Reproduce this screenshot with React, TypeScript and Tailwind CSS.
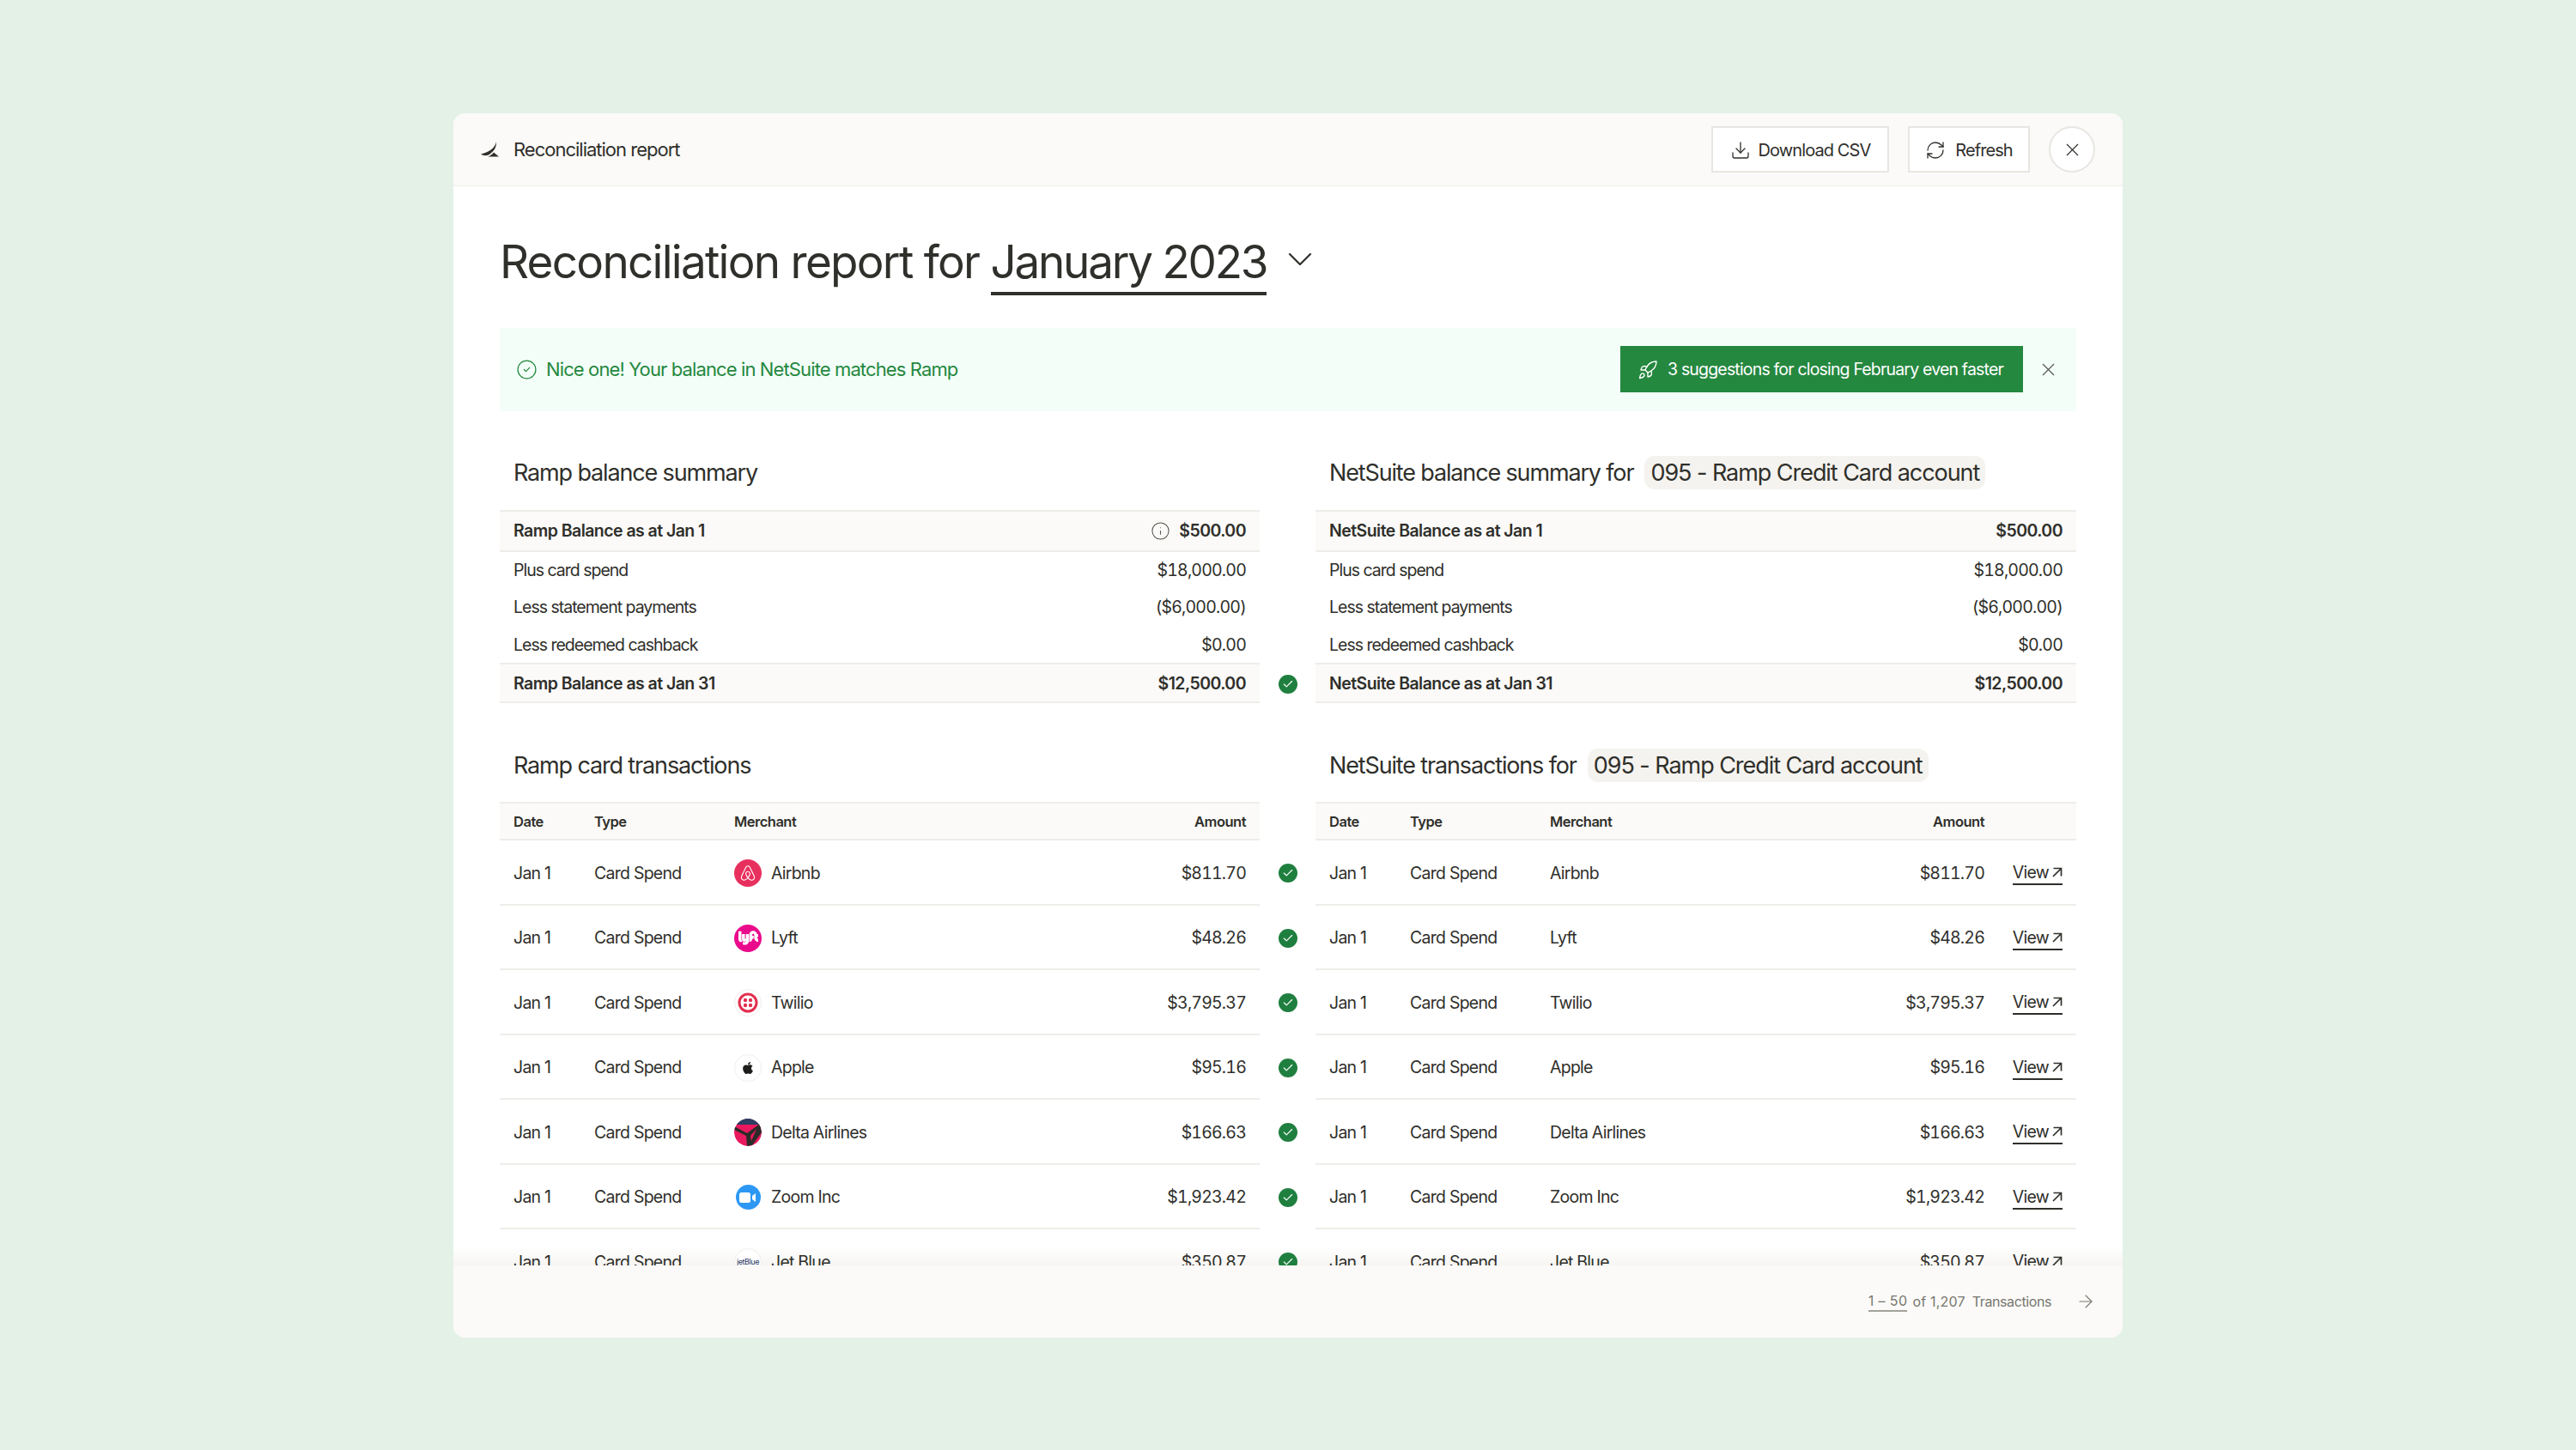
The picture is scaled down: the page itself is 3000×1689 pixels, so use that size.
import React from "react";
import { ArrowRight, Check, CheckCircle2, ChevronDown, Download, Info, RefreshCw, Rocket, X } from "lucide-react";
import { FaAirbnb, FaApple, FaLyft } from "react-icons/fa";

const txns = [
  { merchant: "Airbnb", amount: "$811.70", logo: "airbnb" },
  { merchant: "Lyft", amount: "$48.26", logo: "lyft" },
  { merchant: "Twilio", amount: "$3,795.37", logo: "twilio" },
  { merchant: "Apple", amount: "$95.16", logo: "apple" },
  { merchant: "Delta Airlines", amount: "$166.63", logo: "delta" },
  { merchant: "Zoom Inc", amount: "$1,923.42", logo: "zoom" },
  { merchant: "Jet Blue", amount: "$350.87", logo: "jetblue" },
];

const summary = [
  ["Plus card spend", "$18,000.00"],
  ["Less statement payments", "($6,000.00)"],
  ["Less redeemed cashback", "$0.00"],
];

const MerchantLogo = ({ logo }: { logo: string }) => {
  if (logo === "airbnb") {
    return (
      <div className="flex h-8 w-8 items-center justify-center rounded-full bg-[#e8305f] text-white">
        <FaAirbnb size={20} />
      </div>
    );
  }
  if (logo === "lyft") {
    return (
      <div className="flex h-8 w-8 items-center justify-center rounded-full bg-[#ea0b8c] text-white">
        <FaLyft size={23} />
      </div>
    );
  }
  if (logo === "twilio") {
    return (
      <div className="flex h-8 w-8 items-center justify-center rounded-full border border-[#f1efeb] bg-white">
        <svg width="24" height="24" viewBox="0 0 24 24">
          <circle cx="12" cy="12" r="10" fill="none" stroke="#e2304f" strokeWidth="3" />
          <circle cx="9" cy="9" r="2.2" fill="#e2304f" />
          <circle cx="15" cy="9" r="2.2" fill="#e2304f" />
          <circle cx="9" cy="15" r="2.2" fill="#e2304f" />
          <circle cx="15" cy="15" r="2.2" fill="#e2304f" />
        </svg>
      </div>
    );
  }
  if (logo === "apple") {
    return (
      <div className="flex h-8 w-8 items-center justify-center rounded-full border border-[#f1efeb] bg-white text-[#1d1d1b]">
        <FaApple size={16} />
      </div>
    );
  }
  if (logo === "delta") {
    return (
      <svg width="32" height="32" viewBox="0 0 32 32" className="rounded-full">
        <circle cx="16" cy="16" r="16" fill="#e9185f" />
        <path d="M4 5 A16 16 0 0 1 28 5 L30 7 L2 7 Z" fill="#2d3f63" />
        <path d="M0 9 L15 17 L30 6 L32 16 L21 31 L15 32 L14 20 L0 13 Z" fill="#2b2b28" />
        <path d="M19 20 L26 12 L20 26 Z" fill="#e9185f" />
      </svg>
    );
  }
  if (logo === "zoom") {
    return (
      <div className="mx-[1.5px] flex h-[29px] w-[29px] items-center justify-center rounded-full bg-[#2d98f4]">
        <svg width="22" height="14" viewBox="0 0 22 14">
          <rect x="1" y="1" width="13" height="12" rx="2.5" fill="#fff" />
          <path d="M16 5 L20 2 V12 L16 9 Z" fill="#fff" />
        </svg>
      </div>
    );
  }
  return (
    <div className="flex h-8 w-8 items-center justify-center overflow-hidden rounded-full border border-[#f1efeb] bg-white text-[9px] tracking-[-0.4px] text-[#26325c]">
      jetBlue
    </div>
  );
};

const CheckDot = () => (
  <div className="flex h-[22px] w-[22px] items-center justify-center rounded-full bg-[#1f7f3f] text-white">
    <Check size={14} strokeWidth={2} />
  </div>
);

const SummaryTable = ({ name, info }: { name: string; info?: boolean }) => (
  <div className="text-[19.5px]">
    <div className="flex h-[49px] items-center justify-between border-y-2 border-[#efede9] bg-[#fbfaf8] px-4 pt-[1px] font-semibold tracking-[-0.55px]">
      <span>{name} Balance as at Jan 1</span>
      <span className="flex items-center gap-[10px]">
        {info && <Info size={23} strokeWidth={1.1} className="text-[#55554f]" />}
        $500.00
      </span>
    </div>
    {summary.map(([label, value]) => (
      <div key={label} className="flex h-[43.33px] items-center justify-between px-4 pt-[1px] tracking-[-1px]">
        <span>{label}</span>
        <span className="tabular-nums tracking-[-0.8px]">{value}</span>
      </div>
    ))}
  </div>
);

const TotalRow = ({ name }: { name: string }) => (
  <div className="flex h-[47px] items-center justify-between border-y-2 border-[#efede9] bg-[#fbfaf8] px-4 pt-[2px] text-[19.5px] font-semibold tracking-[-0.55px]">
    <span>{name} Balance as at Jan 31</span>
    <span>$12,500.00</span>
  </div>
);

const AccountPill = () => (
  <span className="mt-[2px] h-[39px] rounded-[12px] bg-[#f5f3ef] px-[7px] leading-[39px] tracking-[-1.05px]">095 - Ramp Credit Card account</span>
);

const App: React.FC = () => {
  return (
    <div className="flex h-[1689px] items-center justify-center bg-[#e4f1e7] font-['Inter',sans-serif] text-[#2f2f2b]">
      <div className="relative flex h-[1426px] w-[1944px] flex-col overflow-hidden rounded-[14px] bg-white">
        {/* soft shade behind the last visible row */}
        <div className="pointer-events-none absolute bottom-[84px] left-0 right-0 h-[22px] bg-gradient-to-b from-transparent to-[#f6f5f2]" />

        {/* top bar */}
        <div className="flex h-[85px] shrink-0 items-center justify-between border-b border-[#f1efeb] bg-[#fbfaf8] pl-[32px] pr-[32px] pt-[1px]">
          <div className="flex items-center gap-[17px] text-[22px] tracking-[-1px]">
            <svg width="21" height="18" viewBox="0 0 21 18" fill="#2f2f2b">
              <path d="M18 0 C17 7 10 12 0 14.5 C3 16.5 7 17 10.5 14.5 C15.5 11 18.5 6 18 0 Z" />
              <path d="M15 12.5 L21 17.5 H8 C11 16.5 13 15 15 12.5 Z" />
            </svg>
            Reconciliation report
          </div>
          <div className="flex items-center gap-[22px] text-[20px] tracking-[-0.9px]">
            <button className="flex h-[54px] w-[207px] items-center justify-center gap-[9px] border-2 border-[#e8e6e1] bg-white pt-[2px]">
              <Download size={24} strokeWidth={1.3} />
              Download CSV
            </button>
            <button className="flex h-[54px] w-[142px] items-center justify-center gap-[11px] border-2 border-[#e8e6e1] bg-white pt-[2px]">
              <RefreshCw size={24} strokeWidth={1.3} />
              Refresh
            </button>
            <button className="flex h-[54px] w-[54px] items-center justify-center rounded-full border-2 border-[#e8e6e1] bg-white">
              <X size={25} strokeWidth={1.1} />
            </button>
          </div>
        </div>

        {/* scroll area */}
        <div className="relative min-h-0 flex-1 overflow-hidden px-[54px]">
          <div className="mt-[52px] flex h-[113px] items-start gap-[15px]">
            <h1 className="text-[53px] leading-[72px] tracking-[-1.72px]">
              Reconciliation report for{" "}
              <span className="inline-block border-b-4 border-[#2f2f2b] leading-[70px] tracking-[-2.25px]">January 2023</span>
            </h1>
            <ChevronDown size={48} strokeWidth={1.1} className="mt-[9px]" />
          </div>

          <div className="flex h-[97px] items-center justify-between bg-[#f3fef8] pl-[19px] pr-[20px] text-[#25883f]">
            <div className="flex items-center gap-[10px] text-[22px] tracking-[-0.88px]">
              <CheckCircle2 size={25} strokeWidth={1.2} />
              Nice one! Your balance in NetSuite matches Ramp
            </div>
            <div className="flex items-center gap-[17px]">
              <div className="flex h-[54px] w-[469px] items-center gap-[11px] bg-[#25883f] pl-[20px] pt-[1px] text-[19.5px] tracking-[-0.82px] text-white">
                <Rocket size={24} strokeWidth={1.4} />
                3 suggestions for closing February even faster
              </div>
              <X size={25} strokeWidth={1.1} className="text-[#55554f]" />
            </div>
          </div>

          {/* balance summaries */}
          <div className="mt-[50px] grid grid-cols-[885px_65px_886px] items-end">
            <h2 className="flex h-[65px] items-start px-4 text-[27px] leading-[44px] tracking-[-1.15px]">Ramp balance summary</h2>
            <div />
            <h2 className="flex h-[65px] items-start gap-[13px] whitespace-nowrap px-4 text-[27px] leading-[44px] tracking-[-1.15px]">
              NetSuite balance summary for <AccountPill />
            </h2>
            <SummaryTable name="Ramp" info />
            <div />
            <SummaryTable name="NetSuite" />
            <TotalRow name="Ramp" />
            <div className="flex h-[47px] items-center justify-center pt-[2px]">
              <CheckDot />
            </div>
            <TotalRow name="NetSuite" />
          </div>

          {/* transactions */}
          <div className="mt-[51px] grid grid-cols-[885px_65px_886px]">
            <h2 className="flex h-[64px] items-start px-4 text-[27px] leading-[44px] tracking-[-1.15px]">Ramp card transactions</h2>
            <div />
            <h2 className="flex h-[64px] items-start gap-[13px] whitespace-nowrap px-4 text-[27px] leading-[44px] tracking-[-1.15px]">
              NetSuite transactions for <AccountPill />
            </h2>

            <div className="grid h-[45px] grid-cols-[94px_163px_1fr_auto] items-center border-y-2 border-[#efede9] bg-[#fbfaf8] px-4 text-[16.5px] font-semibold tracking-[-0.5px]">
              <span>Date</span>
              <span>Type</span>
              <span>Merchant</span>
              <span>Amount</span>
            </div>
            <div />
            <div className="grid h-[45px] grid-cols-[94px_163px_1fr_auto_91px] items-center border-y-2 border-[#efede9] bg-[#fbfaf8] px-4 text-[16.5px] font-semibold tracking-[-0.5px]">
              <span>Date</span>
              <span>Type</span>
              <span>Merchant</span>
              <span>Amount</span>
              <span />
            </div>

            {txns.map((t) => (
              <React.Fragment key={t.merchant}>
                <div className="grid h-[75.5px] grid-cols-[94px_163px_1fr_auto] items-center border-b-2 border-[#efede9] px-4 pt-[2px] text-[19.5px] tracking-[-0.75px]">
                  <span>Jan 1</span>
                  <span>Card Spend</span>
                  <span className="flex items-center gap-[11px]">
                    <MerchantLogo logo={t.logo} />
                    {t.merchant}
                  </span>
                  <span className="tabular-nums tracking-[-0.8px]">{t.amount}</span>
                </div>
                <div className="flex h-[75.5px] items-center justify-center">
                  <CheckDot />
                </div>
                <div className="grid h-[75.5px] grid-cols-[94px_163px_1fr_auto_91px] items-center border-b-2 border-[#efede9] px-4 pt-[2px] text-[19.5px] tracking-[-0.75px]">
                  <span>Jan 1</span>
                  <span>Card Spend</span>
                  <span>{t.merchant}</span>
                  <span className="tabular-nums tracking-[-0.8px]">{t.amount}</span>
                  <span className="flex justify-end">
                    <span className="flex items-center gap-[4px] border-b-2 border-[#2f2f2b] leading-[26px]">
                      View
                      <svg width="12" height="12" viewBox="0 0 12 12" fill="none" stroke="#2f2f2b" strokeWidth="1.7">
                        <path d="M1.5 1.5 H10.5 V10.5 M10.5 1.5 L1 11" />
                      </svg>
                    </span>
                  </span>
                </div>
              </React.Fragment>
            ))}
          </div>
        </div>

        {/* footer */}
        <div className="relative flex h-[84px] shrink-0 items-center justify-end bg-[#fbfaf8] pr-[31px] pt-[1px] text-[16px] tracking-[-0.2px] text-[#77776f]">
          <span className="border-b-2 border-[#a3a39c] leading-[22px] tracking-[0.4px]">1 – 50</span>
          <span className="ml-[6px] tracking-[0.2px]">of 1,207</span>
          <span className="ml-[8px] tracking-[-0.4px]">Transactions</span>
          <ArrowRight size={24} strokeWidth={1.1} className="ml-[28px]" />
        </div>
      </div>
    </div>
  );
};

export default App;
